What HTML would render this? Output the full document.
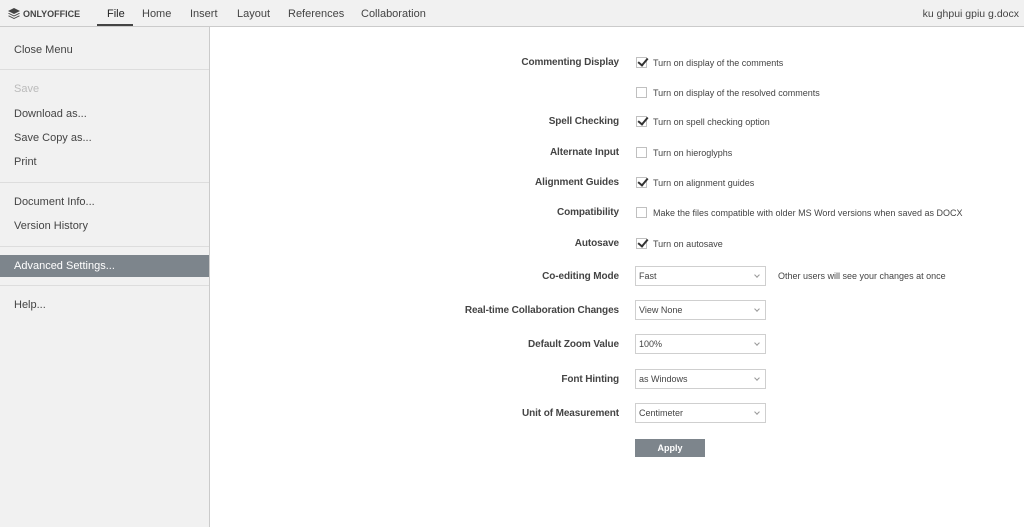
<!DOCTYPE html><html><head><style>
*{box-sizing:border-box;margin:0;padding:0}
body{width:1024px;height:527px;overflow:hidden;background:#fff;font-family:"Liberation Sans",Arial,sans-serif;position:relative;color:#444}
.top{position:absolute;left:0;top:0;width:1024px;height:27px;background:#f1f1f1;border-bottom:1px solid #cbcbcb}
.t{position:absolute;top:8px;font-size:11px;color:#444;white-space:nowrap}
.side{position:absolute;left:0;top:27px;width:210px;height:500px;background:#f1f1f1;border-right:1px solid #cbcbcb}
.m{position:absolute;left:14px;font-size:11px;color:#444}
.sep{position:absolute;left:0;width:209px;height:1px;background:#ddd}
.lb{position:absolute;right:405px;font-size:10px;font-weight:bold;color:#444;white-space:nowrap;letter-spacing:-0.1px}
.cb{position:absolute;left:636px;width:11px;height:11px;border:1px solid #c0c0c0;background:#fff}
.ck::after{content:"";position:absolute;left:3px;top:-2px;width:4px;height:8px;border:solid #333;border-width:0 2px 2px 0;transform:rotate(40deg)}
.ct{position:absolute;left:653px;font-size:9px;color:#444;white-space:nowrap}
.sel{position:absolute;left:635px;width:131px;height:20px;border:1px solid #cfcfcf;font-size:9px;padding:4px 0 0 3px;color:#444}
.sel::after{content:"";position:absolute;right:6px;top:6px;width:3px;height:3px;border:solid #999;border-width:0 1px 1px 0;transform:rotate(45deg)}
</style></head><body>
<div class="top">
<svg style="position:absolute;left:8px;top:8px" width="12" height="11" viewBox="0 0 12 11"><path d="M6 0L12 3 6 6 0 3z" fill="#444"/><path d="M1 5L6 7.5 11 5 12 5.5 6 8.5 0 5.5z" fill="#444"/><path d="M1 7.5L6 10 11 7.5 12 8 6 11 0 8z" fill="#444"/></svg>
<div class="t" style="left:23px;font-size:9px;font-weight:bold;top:9px">ONLYOFFICE</div>
<div class="t" style="left:107px;color:#222">File</div>
<div style="position:absolute;left:97px;top:24px;width:36px;height:2px;background:#444"></div>
<div class="t" style="left:142px">Home</div>
<div class="t" style="left:190px">Insert</div>
<div class="t" style="left:237px">Layout</div>
<div class="t" style="left:288px">References</div>
<div class="t" style="left:361px">Collaboration</div>
<div class="t" style="right:5px;font-size:10.5px">ku ghpui gpiu g.docx</div>
</div>
<div class="side">
<div class="m" style="top:17px">Close Menu</div>
<div class="sep" style="top:42px"></div>
<div class="m" style="top:56px;color:#bbb">Save</div>
<div class="m" style="top:81px">Download as...</div>
<div class="m" style="top:105px">Save Copy as...</div>
<div class="m" style="top:129px">Print</div>
<div class="sep" style="top:155px"></div>
<div class="m" style="top:169px">Document Info...</div>
<div class="m" style="top:193px">Version History</div>
<div class="sep" style="top:219px"></div>
<div style="position:absolute;left:0;top:228px;width:209px;height:22px;background:#7d858c"></div>
<div class="m" style="top:233px;color:#fff">Advanced Settings...</div>
<div class="sep" style="top:258px"></div>
<div class="m" style="top:272px">Help...</div>
</div>
<div class="lb" style="top:57px">Commenting Display</div>
<div class="cb ck" style="top:57px"></div><div class="ct" style="top:58px">Turn on display of the comments</div>
<div class="cb" style="top:87px"></div><div class="ct" style="top:88px">Turn on display of the resolved comments</div>
<div class="lb" style="top:116px">Spell Checking</div>
<div class="cb ck" style="top:116px"></div><div class="ct" style="top:117px">Turn on spell checking option</div>
<div class="lb" style="top:147px">Alternate Input</div>
<div class="cb" style="top:147px"></div><div class="ct" style="top:148px">Turn on hieroglyphs</div>
<div class="lb" style="top:177px">Alignment Guides</div>
<div class="cb ck" style="top:177px"></div><div class="ct" style="top:178px">Turn on alignment guides</div>
<div class="lb" style="top:207px">Compatibility</div>
<div class="cb" style="top:207px"></div><div class="ct" style="top:208px">Make the files compatible with older MS Word versions when saved as DOCX</div>
<div class="lb" style="top:238px">Autosave</div>
<div class="cb ck" style="top:238px"></div><div class="ct" style="top:239px">Turn on autosave</div>
<div class="lb" style="top:271px">Co-editing Mode</div>
<div class="sel" style="top:266px">Fast</div>
<div class="ct" style="left:778px;top:271px">Other users will see your changes at once</div>
<div class="lb" style="top:305px">Real-time Collaboration Changes</div>
<div class="sel" style="top:300px">View None</div>
<div class="lb" style="top:339px">Default Zoom Value</div>
<div class="sel" style="top:334px">100%</div>
<div class="lb" style="top:374px">Font Hinting</div>
<div class="sel" style="top:369px">as Windows</div>
<div class="lb" style="top:408px">Unit of Measurement</div>
<div class="sel" style="top:403px">Centimeter</div>
<div style="position:absolute;left:635px;top:439px;width:70px;height:18px;background:#7d858c;color:#fff;font-size:9px;font-weight:bold;text-align:center;line-height:18px">Apply</div>
</body></html>
